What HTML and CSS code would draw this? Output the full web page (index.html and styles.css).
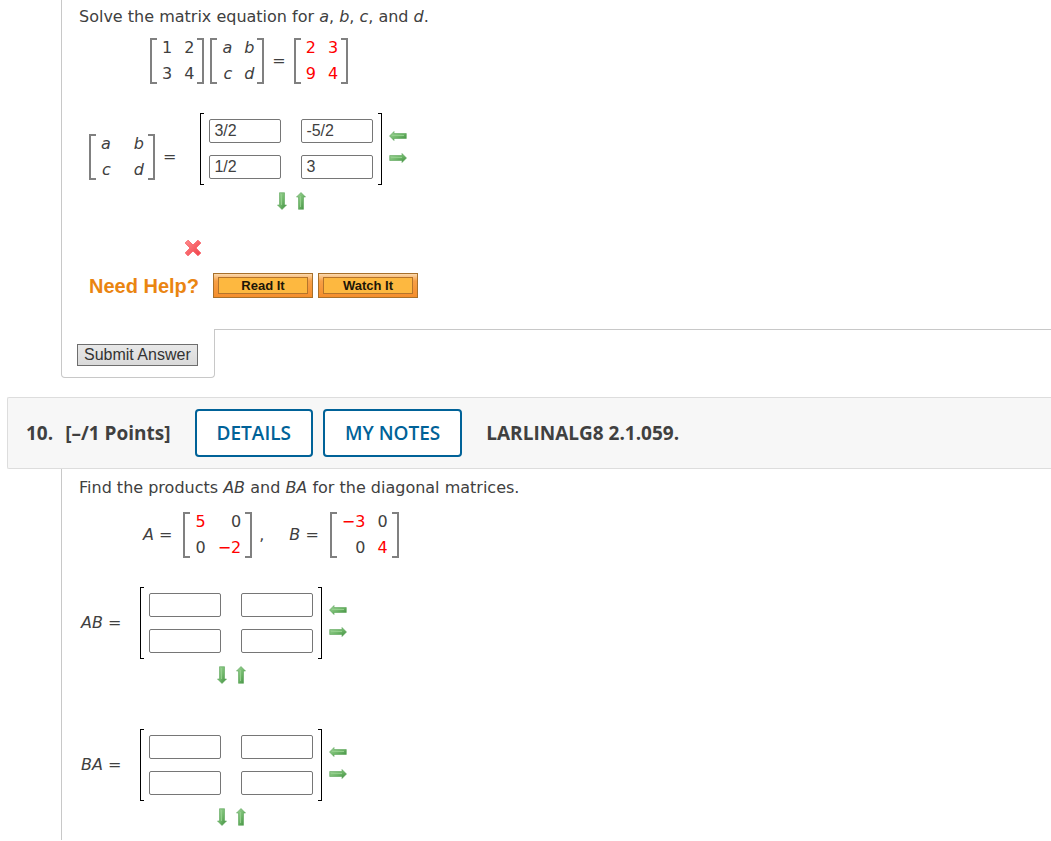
FILE: index.html
```html
<!DOCTYPE html>
<html lang="en">
    <head>
        <meta charset="UTF-8" />
        <meta name="viewport" content="width=device-width, initial-scale=1.0" />
        <title>Matrix Homework</title>
        <link rel="stylesheet" href="styles.css">
    </head>
    <body>
        <svg class="sprite" aria-hidden="true">
            <defs>
                <linearGradient id="green" x1="0" y1="0" x2="1" y2="1">
                    <stop offset="0" stop-color="#a2d49c" />
                    <stop offset="0.5" stop-color="#72b96c" />
                    <stop offset="1" stop-color="#3c8a3c" />
                </linearGradient>
                <linearGradient id="red" x1="0" y1="0" x2="1" y2="1">
                    <stop offset="0" stop-color="#ff8f8f" />
                    <stop offset="1" stop-color="#f03c46" />
                </linearGradient>
                <symbol id="arrow-left" viewBox="0 0 18 10">
                    <path d="M.5 5 5 .5V2.5H17.3V7.5H5V9.5Z" fill="url(#green)" stroke="#5aa558" stroke-width=".6" />
                    <path d="M3 4.5H15" stroke="#93cf8c" />
                </symbol>
                <symbol id="arrow-right" viewBox="0 0 18 10">
                    <path d="M17.5 5 13 .5V2.5H.7V7.5H13V9.5Z" fill="url(#green)" stroke="#5aa558" stroke-width=".6" />
                    <path d="M2 4.5H13" stroke="#93cf8c" />
                </symbol>
                <symbol id="arrow-down" viewBox="0 0 10 18">
                    <path d="M5 17.5.5 13H2.5V.7H7.5V13H9.5Z" fill="url(#green)" stroke="#5aa558" stroke-width=".6" />
                    <path d="M4.5 2V13" stroke="#93cf8c" />
                </symbol>
                <symbol id="arrow-up" viewBox="0 0 10 18">
                    <path d="M5 .5.5 5H2.5V17.3H7.5V5H9.5Z" fill="url(#green)" stroke="#5aa558" stroke-width=".6" />
                    <path d="M4.5 4V15" stroke="#93cf8c" />
                </symbol>
            </defs>
        </svg>

        <main>
            <section class="question">
                <div class="question-body">
                    <p>Solve the matrix equation for <i>a</i>, <i>b</i>, <i>c</i>, and <i>d</i>.</p>
                    <div class="equation">
                        <div class="matrix pair"><span>1</span><span>2</span><span>3</span><span>4</span></div>
                        <div class="matrix pair"><i>a</i><i>b</i><i>c</i><i>d</i></div>
                        <span class="equals">=</span>
                        <div class="matrix pair given"><span>2</span><span>3</span><span>9</span><span>4</span></div>
                    </div>

                    <div class="answer answer-unknowns">
                        <div class="answer-label">
                            <div class="matrix wide"><i>a</i><i>b</i><i>c</i><i>d</i></div>
                            <span>=</span>
                        </div>
                        <div class="entry">
                            <input type="text" aria-label="a" value="3/2">
                            <input type="text" aria-label="b" value="-5/2">
                            <input type="text" aria-label="c" value="1/2">
                            <input type="text" aria-label="d" value="3">
                        </div>
                        <div class="columns">
                            <button aria-label="Remove column"><svg><use href="#arrow-left" /></svg></button>
                            <button aria-label="Add column"><svg><use href="#arrow-right" /></svg></button>
                        </div>
                        <div class="rows">
                            <button aria-label="Add row"><svg><use href="#arrow-down" /></svg></button>
                            <button aria-label="Remove row"><svg><use href="#arrow-up" /></svg></button>
                        </div>
                    </div>

                    <svg class="wrong" viewBox="0 0 18 18" role="img" aria-label="Incorrect">
                        <path d="M4 1.2 9 6 14 1.2 16.8 4 12 9 16.8 14 14 16.8 9 12 4 16.8 1.2 14 6 9 1.2 4Z" fill="url(#red)" stroke="#fa6a70" stroke-linejoin="round" />
                    </svg>

                    <div class="help">
                        <strong>Need Help?</strong>
                        <button class="help-button">Read It</button>
                        <button class="help-button">Watch It</button>
                    </div>
                </div>
                <div class="question-end">
                    <div class="submit-tab"><button class="submit">Submit Answer</button></div>
                    <div class="rule"></div>
                </div>
            </section>

            <header class="question-header">
                <span class="number">10.</span>
                <span>[–/1 Points]</span>
                <div class="actions">
                    <button>DETAILS</button>
                    <button>MY NOTES</button>
                </div>
                <span>LARLINALG8 2.1.059.</span>
            </header>

            <section class="question">
                <div class="question-body second">
                    <p>Find the products <i>AB</i> and <i>BA</i> for the diagonal matrices.</p>
                    <div class="equation definitions">
                        <span><i>A</i> =</span>
                        <div class="matrix"><span class="red">5</span><span>0</span><span>0</span><span class="red">−2</span></div>
                        <span class="comma">,</span>
                        <span><i>B</i> =</span>
                        <div class="matrix"><span class="red">−3</span><span>0</span><span>0</span><span class="red">4</span></div>
                    </div>

                    <div class="answer">
                        <div class="answer-label"><span><i>AB</i> =</span></div>
                        <div class="entry">
                            <input type="text" aria-label="AB row 1 column 1">
                            <input type="text" aria-label="AB row 1 column 2">
                            <input type="text" aria-label="AB row 2 column 1">
                            <input type="text" aria-label="AB row 2 column 2">
                        </div>
                        <div class="columns">
                            <button aria-label="Remove column"><svg><use href="#arrow-left" /></svg></button>
                            <button aria-label="Add column"><svg><use href="#arrow-right" /></svg></button>
                        </div>
                        <div class="rows">
                            <button aria-label="Add row"><svg><use href="#arrow-down" /></svg></button>
                            <button aria-label="Remove row"><svg><use href="#arrow-up" /></svg></button>
                        </div>
                    </div>

                    <div class="answer">
                        <div class="answer-label"><span><i>BA</i> =</span></div>
                        <div class="entry">
                            <input type="text" aria-label="BA row 1 column 1">
                            <input type="text" aria-label="BA row 1 column 2">
                            <input type="text" aria-label="BA row 2 column 1">
                            <input type="text" aria-label="BA row 2 column 2">
                        </div>
                        <div class="columns">
                            <button aria-label="Remove column"><svg><use href="#arrow-left" /></svg></button>
                            <button aria-label="Add column"><svg><use href="#arrow-right" /></svg></button>
                        </div>
                        <div class="rows">
                            <button aria-label="Add row"><svg><use href="#arrow-down" /></svg></button>
                            <button aria-label="Remove row"><svg><use href="#arrow-up" /></svg></button>
                        </div>
                    </div>
                </div>
            </section>
        </main>
    </body>
</html>
```
FILE: styles.css
```css
* {
    box-sizing: border-box;
}

body {
    margin: 0;
    font-family: Verdana, "DejaVu Sans", sans-serif;
    font-size: 16px;
    line-height: 24px;
    color: #404040;
    background-color: #fff;
}

button {
    font: inherit;
    cursor: pointer;
}

.sprite {
    position: absolute;
    width: 0;
    height: 0;
}

.question {
    margin-left: 61px;
}

.question-body {
    border-left: 1px solid #c8c8c8;
    padding: 5px 17px 31px;
}

.question-body p {
    margin: 0 0 9px;
}

.question-body.second {
    padding-top: 7px;
    padding-bottom: 14px;
}

.second p {
    margin-bottom: 12px;
}

/* matrices */
.equation {
    display: flex;
    align-items: center;
    gap: 6px;
    padding-left: 71px;
}

.equation .equals {
    margin: 0 2px;
}

.definitions {
    gap: 11px;
    padding-left: 64px;
}

.definitions .comma {
    margin: 0 14px 0 -4px;
}

.matrix {
    position: relative;
    display: grid;
    grid-template-columns: auto auto;
    column-gap: 12px;
    justify-items: end;
    padding: 0 11px 0 12px;
    line-height: 26px;
    height: 46px;
    align-content: center;
}

.matrix.pair {
    padding: 0 10px 0 12px;
}

.matrix.wide {
    column-gap: 23px;
}

.matrix::before,
.matrix::after {
    content: "";
    position: absolute;
    top: 0;
    bottom: 0;
    width: 5px;
    border: 2px solid #808080;
}

.matrix::before {
    left: 0;
    border-right: 0;
}

.matrix::after {
    right: 0;
    border-left: 0;
}

.given,
.red {
    color: #f00;
}

/* answer grids */
.answer {
    display: grid;
    grid-template-columns: auto auto 1fr;
    column-gap: 7px;
    row-gap: 7px;
    margin-top: 29px;
    padding-left: 2px;
}

.answer + .answer {
    margin-top: 45px;
}

.answer-unknowns {
    padding-left: 10px;
}

.answer-label {
    display: flex;
    align-items: center;
    gap: 8px;
    margin-right: 12px;
}

.answer-unknowns .answer-label {
    margin: 16px 17px 0 0;
}

.entry {
    position: relative;
    display: grid;
    grid-template-columns: 72px 72px;
    gap: 12px 20px;
    padding: 6px 9px;
}

.entry::before,
.entry::after {
    content: "";
    position: absolute;
    top: 0;
    bottom: 0;
    width: 3px;
    border: 1px solid #000;
}

.entry::before {
    left: 0;
    border-right: 0;
}

.entry::after {
    right: 0;
    border-left: 0;
}

.entry input {
    width: 100%;
    height: 24px;
    padding: 0 4px;
    border: 1px solid #767676;
    border-radius: 2px;
    font: 16px "Liberation Sans", Arial, sans-serif;
    color: #404040;
    background-color: #fff;
}

.columns,
.rows {
    display: flex;
    gap: 12px;
}

.columns {
    flex-direction: column;
    padding-top: 18px;
}

.rows {
    grid-column: 2;
    justify-content: center;
    gap: 9px;
}

.columns button,
.rows button {
    display: flex;
    padding: 0;
    border: 0;
    background: none;
}

.columns svg {
    width: 18px;
    height: 10px;
}

.rows svg {
    width: 10px;
    height: 18px;
}

/* feedback and help */
.wrong {
    display: block;
    width: 18px;
    height: 18px;
    margin: 29px 0 0 105px;
}

.help {
    display: flex;
    align-items: center;
    gap: 5px;
    margin-top: 16px;
    padding-left: 10px;
    font-family: "Liberation Sans", Arial, sans-serif;
}

.help strong {
    margin-right: 9px;
    font-size: 20px;
    color: #ea8511;
}

.help-button {
    position: relative;
    z-index: 0;
    width: 100px;
    height: 25px;
    padding: 0;
    border: 1px solid #a8702a;
    background: linear-gradient(#fbd9ae, #f7a046 30%, #f58e2c);
    font-size: 13px;
    font-weight: bold;
    line-height: 17px;
    color: #1c1608;
}

.help-button::before {
    content: "";
    position: absolute;
    z-index: -1;
    inset: 3px 4px;
    border: 1px solid #b5742b;
    background-color: #fdb840;
}

.question-end {
    display: flex;
}

.submit-tab {
    padding: 15px 16px 11px 15px;
    border: 1px solid #c8c8c8;
    border-top: 0;
    border-radius: 0 0 4px 4px;
}

.submit {
    display: block;
    height: 22px;
    padding: 0 6px;
    border: 1px solid #6e6e6e;
    background: linear-gradient(#e8e8e8, #dadada);
    font-family: "Liberation Sans", Arial, sans-serif;
    line-height: 20px;
    color: #333;
}

.rule {
    flex: 1;
    border-top: 1px solid #c8c8c8;
}

/* question bar */
.question-header {
    display: flex;
    align-items: center;
    gap: 24px;
    margin: 19px 0 0 7px;
    padding: 11px 0 11px 18px;
    border: 1px solid #ddd;
    border-right: 0;
    border-radius: 2px 0 0 2px;
    background-color: #f7f7f7;
    font-family: "Open Sans", sans-serif;
    font-size: 19px;
    font-weight: 700;
}

.question-header .number {
    margin-right: -12px;
}

.actions {
    display: flex;
    gap: 10px;
}

.actions button {
    height: 48px;
    padding: 0 20px;
    border: 2px solid #006298;
    border-radius: 4px;
    background-color: #fff;
    font-weight: 600;
    color: #006298;
}
```
